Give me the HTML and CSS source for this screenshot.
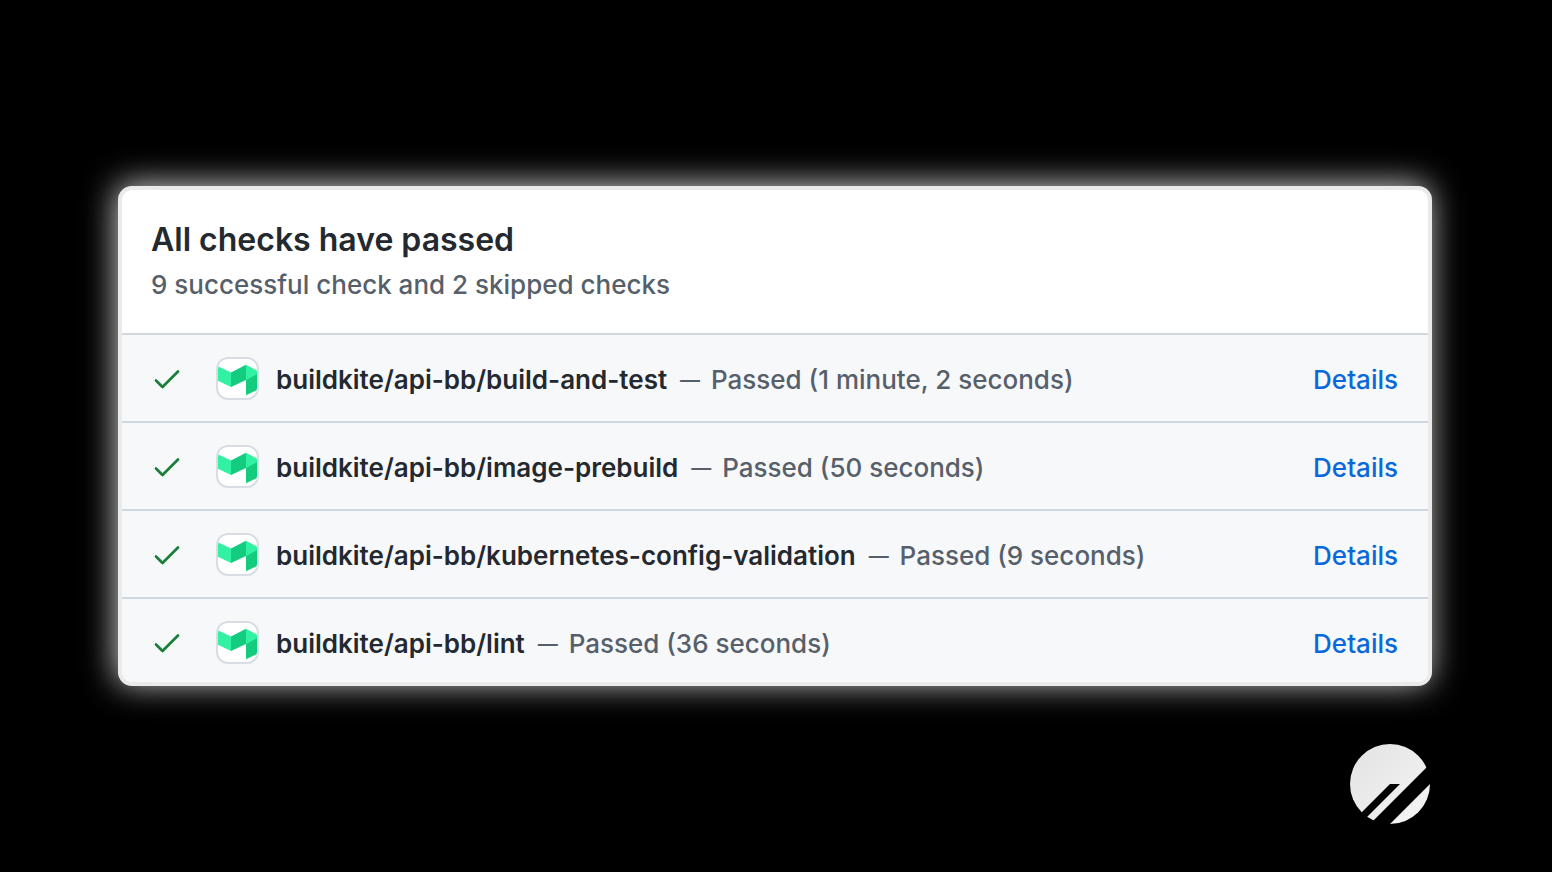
FILE: index.html
```html
<!DOCTYPE html>
<html lang="en">
<head>
    <meta charset="UTF-8">
    <title>All checks have passed</title>
    <meta name="viewport" content="width=device-width, initial-scale=1">
    <link rel="stylesheet" href="styles.css">
</head>
<body>
<!-- Shared icons -->
<svg class="sprite" aria-hidden="true">
    <symbol id="check" viewBox="0 0 26 20">
        <path d="M2 11.5 L8.5 18 L24 2.5" fill="none" stroke="#1a7f37" stroke-width="2.7" stroke-linecap="round" stroke-linejoin="round"/>
    </symbol>
    <symbol id="buildkite" viewBox="0 0 39 39">
        <path d="M0 7.2 L13 13.4 V28 L0 21.7Z" fill="#30f2a2"/>
        <path d="M28 5.7 L39 11.5 V17 L28 21Z" fill="#30f2a2"/>
        <path d="M13 13.4 L28 5.7 V21 L13 28Z" fill="#14cc80"/>
        <path d="M28 21 L39 15.3 V31 L28 36.2Z" fill="#14cc80"/>
    </symbol>
</svg>

<main class="card">
    <header class="card-header">
        <h1>All checks have passed</h1>
        <p>9 successful check and 2 skipped checks</p>
    </header>
    <ul class="checks">
        <li class="check">
            <svg class="tick" role="img" aria-label="Passed"><use href="#check"/></svg>
            <svg class="avatar" aria-hidden="true"><use href="#buildkite"/></svg>
            <p class="check-text"><strong>buildkite/api-bb/build-and-test</strong> <span class="dash">—</span> Passed (1 minute, 2 seconds)</p>
            <a href="#">Details</a>
        </li>
        <li class="check">
            <svg class="tick" role="img" aria-label="Passed"><use href="#check"/></svg>
            <svg class="avatar" aria-hidden="true"><use href="#buildkite"/></svg>
            <p class="check-text"><strong>buildkite/api-bb/image-prebuild</strong> <span class="dash">—</span> Passed (50 seconds)</p>
            <a href="#">Details</a>
        </li>
        <li class="check">
            <svg class="tick" role="img" aria-label="Passed"><use href="#check"/></svg>
            <svg class="avatar" aria-hidden="true"><use href="#buildkite"/></svg>
            <p class="check-text"><strong>buildkite/api-bb/kubernetes-config-validation</strong> <span class="dash">—</span> Passed (9 seconds)</p>
            <a href="#">Details</a>
        </li>
        <li class="check">
            <svg class="tick" role="img" aria-label="Passed"><use href="#check"/></svg>
            <svg class="avatar" aria-hidden="true"><use href="#buildkite"/></svg>
            <p class="check-text"><strong>buildkite/api-bb/lint</strong> <span class="dash">—</span> Passed (36 seconds)</p>
            <a href="#">Details</a>
        </li>
    </ul>
</main>

<footer>
    <svg class="logo" viewBox="0 0 80 80" aria-hidden="true">
        <defs>
            <clipPath id="disc"><circle cx="40" cy="40" r="40"/></clipPath>
            <linearGradient id="shade" x1="0" y1="0" x2="1" y2="1">
                <stop offset="0" stop-color="#e2e2e2"/>
                <stop offset="1" stop-color="#f6f6f6"/>
            </linearGradient>
        </defs>
        <path clip-path="url(#disc)" fill="url(#shade)" d="M0 0 H80 V20 L20 80 H10 L50 40 H40 L0 80Z M80 40 V80 H40Z"/>
    </svg>
</footer>
</body>
</html>
```

FILE: styles.css
```css
* { box-sizing: border-box; }
body {
    margin: 0;
    padding: 186px 120px 48px 118px;
    background: #000;
    color: #24292f;
    font-family: Inter, "Liberation Sans", sans-serif;
    font-size: 26px;
    font-weight: 500;
    line-height: 32px;
}
h1, p, ul { margin: 0; padding: 0; }
.sprite { position: absolute; width: 0; height: 0; }
.card {
    background: #fff;
    border: 4px solid #eaeaea;
    border-radius: 14px;
    box-shadow: -2px -2px 32px rgba(255, 255, 255, 0.8);
    overflow: hidden;
}
.card-header { padding: 30px 29px 32px; }
.card-header h1 { font-size: 32px; font-weight: 600; line-height: 40px; }
.card-header p { color: #57606a; margin-top: 8px; line-height: 33px; }
.checks { list-style: none; background: #f6f8fa; }
.check {
    display: flex;
    align-items: center;
    height: 88px;
    padding: 0 30px 0 32px;
    border-top: 2px solid #d0d7de;
}
.check:last-child { height: 85px; padding-top: 3px; }
.tick { width: 26px; height: 20px; margin-right: 36px; margin-top: 2px; }
.avatar {
    width: 43px;
    height: 43px;
    margin-right: 17px;
    background: #fff;
    border: 2px solid #d8dee4;
    border-radius: 12px;
}
.check-text, .check a { padding-top: 4px; }
.check-text { flex: 1; color: #57606a; }
.check-text strong { color: #24292f; font-weight: 600; }
.dash { margin: 0 4px 0 6px; font-size: 20px; line-height: 20px; vertical-align: 2px; }
.check a { color: #0969da; text-decoration: none; }
footer { display: flex; justify-content: flex-end; padding: 58px 2px 0 0; }
.logo { width: 80px; height: 80px; }
@media (max-width: 900px) {
    body { padding: 32px 16px; }
    .check, .check:last-child { height: auto; padding-top: 16px; padding-bottom: 16px; }
}
```
